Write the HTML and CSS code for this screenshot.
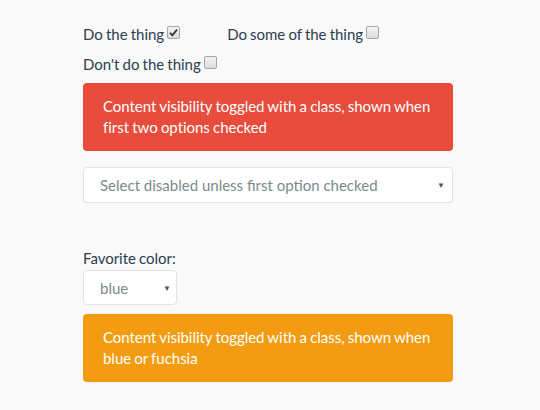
FILE: index.html
```html
<!DOCTYPE html>
<html>
<head>
<meta charset="utf-8">
<link rel="stylesheet" href="styles.css">
</head>
<body>
<div class="page">
  <div class="checks">
    <label class="check">Do the thing<span class="box checked"><svg width="9" height="9" viewBox="0 0 9 9"><path d="M1 4.8 L3.4 7.2 L8 1.6" fill="none" stroke="#333" stroke-width="1.8"/></svg></span></label>
    <label class="check">Do some of the thing<span class="box"></span></label>
    <label class="check">Don't do the thing<span class="box"></span></label>
  </div>
  <div class="alert red">Content visibility toggled with a class, shown when first two options checked</div>
  <div class="select wide"><span class="sel-text">Select disabled unless first option checked</span><span class="caret">▼</span></div>
  <div class="label">Favorite color:</div>
  <div class="select small"><span class="sel-text">blue</span><span class="caret">▼</span></div>
  <div class="alert orange">Content visibility toggled with a class, shown when blue or fuchsia</div>
</div>
</body>
</html>
```
FILE: styles.css
```css
html, body {
  margin: 0;
  padding: 0;
  background: #f9f9f9;
}
body {
  font-family: Lato, "Open Sans", sans-serif;
  font-size: 15px;
  color: #2c3e50;
  letter-spacing: -0.03px;
  word-spacing: -0.6px;
}
.page {
  width: 370px;
  padding: 24px 0 0 83px;
}
.checks {
  display: flex;
  flex-wrap: wrap;
  row-gap: 9px;
  column-gap: 47px;
  width: 300px;
  line-height: 21px;
}
.check {
  display: flex;
  align-items: center;
}
.box {
  display: inline-flex;
  align-items: center;
  justify-content: center;
  width: 11px;
  height: 11px;
  margin-left: 3px;
  margin-top: -4px;
  border: 1px solid #a6a6a6;
  border-radius: 2px;
  background: linear-gradient(#f4f4f4, #dcdcdc);
}
.alert {
  margin-top: 8px;
  padding: 13px 20px;
  border-radius: 4px;
  color: #fff;
  line-height: 21px;
}
.red { background: #e74c3c; }
.orange { background: #f39c12; margin-top: 9px; }
.select {
  display: flex;
  align-items: center;
  justify-content: space-between;
  box-sizing: border-box;
  height: 36px;
  border: 1px solid #dce4ec;
  border-radius: 4px;
  background: #fff;
  color: #7b8a8b;
  letter-spacing: 0;
  word-spacing: 0;
}
.wide {
  margin-top: 16px;
  padding: 0 7px 0 16px;
}
.small {
  width: 94px;
  height: 35px;
  margin-top: 1px;
  padding: 0 5px 0 16px;
}
.caret {
  font-size: 8px;
  color: #555;
}
.label {
  margin-top: 45px;
  line-height: 21px;
}
```
